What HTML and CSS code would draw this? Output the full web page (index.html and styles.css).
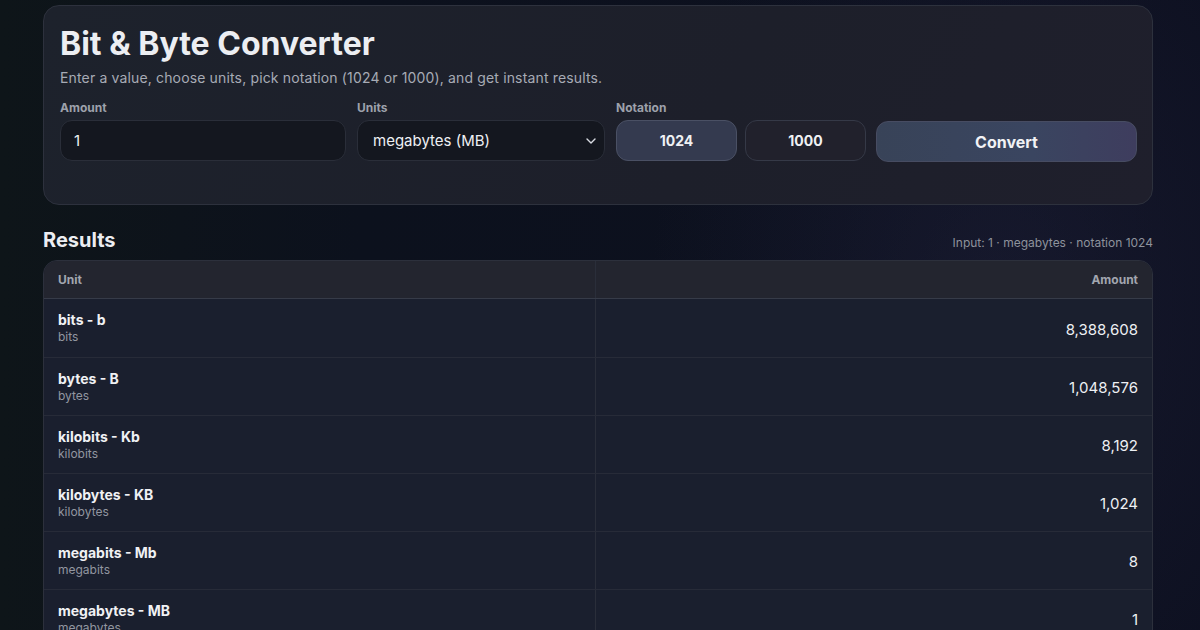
FILE: index.html
```html
<!DOCTYPE html>
<html lang="en">
<head>
<meta charset="utf-8">
<title>Bit &amp; Byte Converter</title>
<link rel="stylesheet" href="styles.css">
</head>
<body>
<div class="page">
  <section class="card">
    <h1 class="title">Bit &amp; Byte Converter</h1>
    <p class="subtitle">Enter a value, choose units, pick notation (1024 or 1000), and get instant results.</p>
    <div class="form">
      <div class="field">
        <label class="label">Amount</label>
        <div class="input">1</div>
      </div>
      <div class="field">
        <label class="label">Units</label>
        <div class="input select">
          <span>megabytes (MB)</span>
          <svg class="chev" width="10" height="6" viewBox="0 0 10 6"><path d="M1 1l4 4 4-4" fill="none" stroke="#d8dbe2" stroke-width="1.4" stroke-linecap="round" stroke-linejoin="round"/></svg>
        </div>
      </div>
      <div class="field">
        <label class="label">Notation</label>
        <div class="toggle">
          <button class="tbtn active">1024</button>
          <button class="tbtn">1000</button>
        </div>
      </div>
      <div class="field end">
        <button class="convert">Convert</button>
      </div>
    </div>
  </section>

  <div class="results-head">
    <h2 class="rtitle">Results</h2>
    <span class="meta">Input: 1 · megabytes · notation 1024</span>
  </div>

  <div class="table">
    <div class="row head">
      <div class="cell">Unit</div>
      <div class="cell num">Amount</div>
    </div>
    <div class="row">
      <div class="cell"><div class="uname">bits - b</div><div class="usub">bits</div></div>
      <div class="cell num val">8,388,608</div>
    </div>
    <div class="row">
      <div class="cell"><div class="uname">bytes - B</div><div class="usub">bytes</div></div>
      <div class="cell num val">1,048,576</div>
    </div>
    <div class="row">
      <div class="cell"><div class="uname">kilobits - Kb</div><div class="usub">kilobits</div></div>
      <div class="cell num val">8,192</div>
    </div>
    <div class="row">
      <div class="cell"><div class="uname">kilobytes - KB</div><div class="usub">kilobytes</div></div>
      <div class="cell num val">1,024</div>
    </div>
    <div class="row">
      <div class="cell"><div class="uname">megabits - Mb</div><div class="usub">megabits</div></div>
      <div class="cell num val">8</div>
    </div>
    <div class="row">
      <div class="cell"><div class="uname">megabytes - MB</div><div class="usub">megabytes</div></div>
      <div class="cell num val">1</div>
    </div>
  </div>
</div>
</body>
</html>
```

FILE: styles.css
```css
* { box-sizing: border-box; }
html, body { margin: 0; padding: 0; }
body {
  width: 1200px;
  height: 630px;
  overflow: hidden;
  font-family: Inter, "Noto Sans", "Liberation Sans", sans-serif;
  color: #eef0f4;
  background:
    radial-gradient(ellipse 500px 700px at 1000px 300px, rgba(40, 40, 70, 0.35), transparent 70%),
    linear-gradient(90deg, #0e1519 0%, #0c111d 30%, #0d1020 100%);
}
.page {
  width: 1110px;
  margin-left: 43px;
  padding-top: 5px;
}
.card {
  background: linear-gradient(120deg, #1d222c 0%, #1d1f2a 60%, #1f1f2c 100%);
  border: 1px solid #2d313d;
  border-radius: 16px;
  padding: 18px 16px 43px;
}
.title {
  margin: 0;
  font-size: 32px;
  font-weight: 700;
  letter-spacing: 0;
  line-height: 40px;
  color: #eceef2;
}
.subtitle {
  margin: 4px 0 0;
  font-size: 14px;
  letter-spacing: 0.15px;
  line-height: 20px;
  color: #a7abb5;
}
.form {
  display: grid;
  grid-template-columns: 286px 248px 249px 261px;
  column-gap: 11px;
  margin-top: 12px;
}
.field { display: flex; flex-direction: column; }
.field.end { justify-content: flex-end; }
.label {
  font-size: 12px;
  font-weight: 700;
  color: #9da1ab;
  line-height: 16px;
  margin-bottom: 4px;
}
.input {
  height: 41px;
  background: #14171f;
  border: 1px solid #2a2e39;
  border-radius: 12px;
  padding: 0 13px;
  display: flex;
  align-items: center;
  font-size: 15px;
  color: #eef0f4;
}
.select {
  justify-content: space-between;
  padding: 0 8px 0 15px;
}
.chev { flex: none; }
.toggle {
  display: grid;
  grid-template-columns: 121px 121px;
  column-gap: 8px;
}
.tbtn {
  height: 41px;
  border-radius: 12px;
  border: 1px solid #353947;
  background: #21212c;
  color: #f0f1f4;
  font-family: inherit;
  font-size: 14px;
  font-weight: 700;
}
.tbtn.active {
  background: #343a4f;
  border-color: #4a5064;
}
.convert {
  height: 41px;
  margin-bottom: -1px;
  border-radius: 12px;
  border: 1px solid #474c62;
  background: linear-gradient(90deg, #384358 0%, #3a4560 60%, #3e3d5e 100%);
  color: #f1f2f5;
  font-family: inherit;
  font-size: 16px;
  font-weight: 700;
}
.results-head {
  display: flex;
  justify-content: space-between;
  align-items: flex-end;
  margin-top: 22px;
  padding-bottom: 7px;
}
.rtitle {
  margin: 0;
  font-size: 20px;
  font-weight: 700;
  line-height: 26px;
  color: #eceef2;
}
.meta {
  font-size: 12px;
  color: #8e929c;
  line-height: 20px;
}
.table {
  border: 1px solid #2c303c;
  border-radius: 14px;
  overflow: hidden;
  background: #1a1f2e;
}
.row {
  display: grid;
  grid-template-columns: 551px 1fr;
  height: 58px;
  border-top: 1px solid #272b38;
}
.row.head {
  height: 38px;
  border-top: none;
  background: #23252f;
  border-bottom: 1px solid #363b48;
}
.row.head + .row { border-top: none; }
.cell {
  padding: 0 14px;
  display: flex;
  flex-direction: column;
  justify-content: center;
}
.cell + .cell { border-left: 1px solid #2a2e3a; }
.row.head .cell {
  font-size: 12px;
  font-weight: 700;
  color: #a2a6af;
}
.num { align-items: flex-end; }
.uname {
  font-size: 14px;
  font-weight: 700;
  line-height: 18px;
  color: #f0f1f4;
}
.usub {
  font-size: 12px;
  line-height: 16px;
  color: #9296a0;
}
.val {
  font-size: 15px;
  color: #eef0f4;
  padding-top: 2px;
}
```
